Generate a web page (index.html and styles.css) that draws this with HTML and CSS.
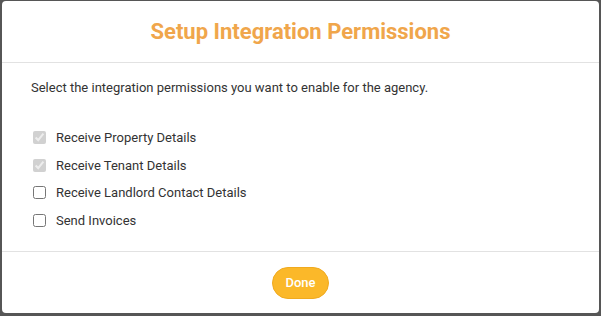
FILE: index.html
```html
<!DOCTYPE html>
<html>
<head>
<meta charset="utf-8">
<link rel="stylesheet" href="styles.css">
</head>
<body>
<div class="modal">
  <div class="modal-header"><h1 class="title">Setup Integration Permissions</h1></div>
  <div class="modal-body">
    <p class="intro">Select the integration permissions you want to enable for the agency.</p>
    <ul class="perms">
      <li><label><input type="checkbox" checked disabled> <span>Receive Property Details</span></label></li>
      <li><label><input type="checkbox" checked disabled> <span>Receive Tenant Details</span></label></li>
      <li><label><input type="checkbox"> <span>Receive Landlord Contact Details</span></label></li>
      <li><label><input type="checkbox"> <span>Send Invoices</span></label></li>
    </ul>
  </div>
  <div class="modal-footer"><button class="done">Done</button></div>
</div>
</body>
</html>
```
FILE: styles.css
```css
html, body { margin: 0; padding: 0; }
body {
  background: #565656;
  font-family: Roboto, "Liberation Sans", sans-serif;
  height: 316px;
  overflow: hidden;
}
.modal {
  margin: 1px 2px 0 2px;
  width: 597px;
  height: 312px;
  background: #fff;
  border-radius: 4px;
  display: flex;
  flex-direction: column;
}
.modal-header {
  height: 61px;
  border-bottom: 1px solid #e2e2e2;
  display: flex;
  align-items: center;
  justify-content: center;
}
.title {
  margin: 0;
  font-size: 22px;
  font-weight: 700;
  color: #f0a64b;
}
.modal-body {
  flex: 1;
  border-bottom: 1px solid #e2e2e2;
  padding: 17px 29px 0 29px;
}
.intro {
  margin: 0;
  font-size: 13px;
  color: #333;
  line-height: 16px;
}
.perms {
  list-style: none;
  margin: 28px 0 0 0;
  padding: 0;
}
.perms li {
  height: 27.5px;
  display: flex;
  align-items: center;
}
.perms label {
  display: flex;
  align-items: center;
  font-size: 13px;
  color: #333;
}
.perms input {
  margin: 0 10px 0 2px;
  width: 13px;
  height: 13px;
}
.modal-footer {
  height: 61px;
  display: flex;
  align-items: center;
  justify-content: center;
}
.done {
  background: #fbb829;
  border: 1px solid #f0aa1f;
  border-radius: 16px;
  width: 57px;
  height: 32px;
  color: #fff;
  font-family: Roboto, "Liberation Sans", sans-serif;
  font-size: 13px;
  font-weight: 500;
  padding: 0;
}
```
